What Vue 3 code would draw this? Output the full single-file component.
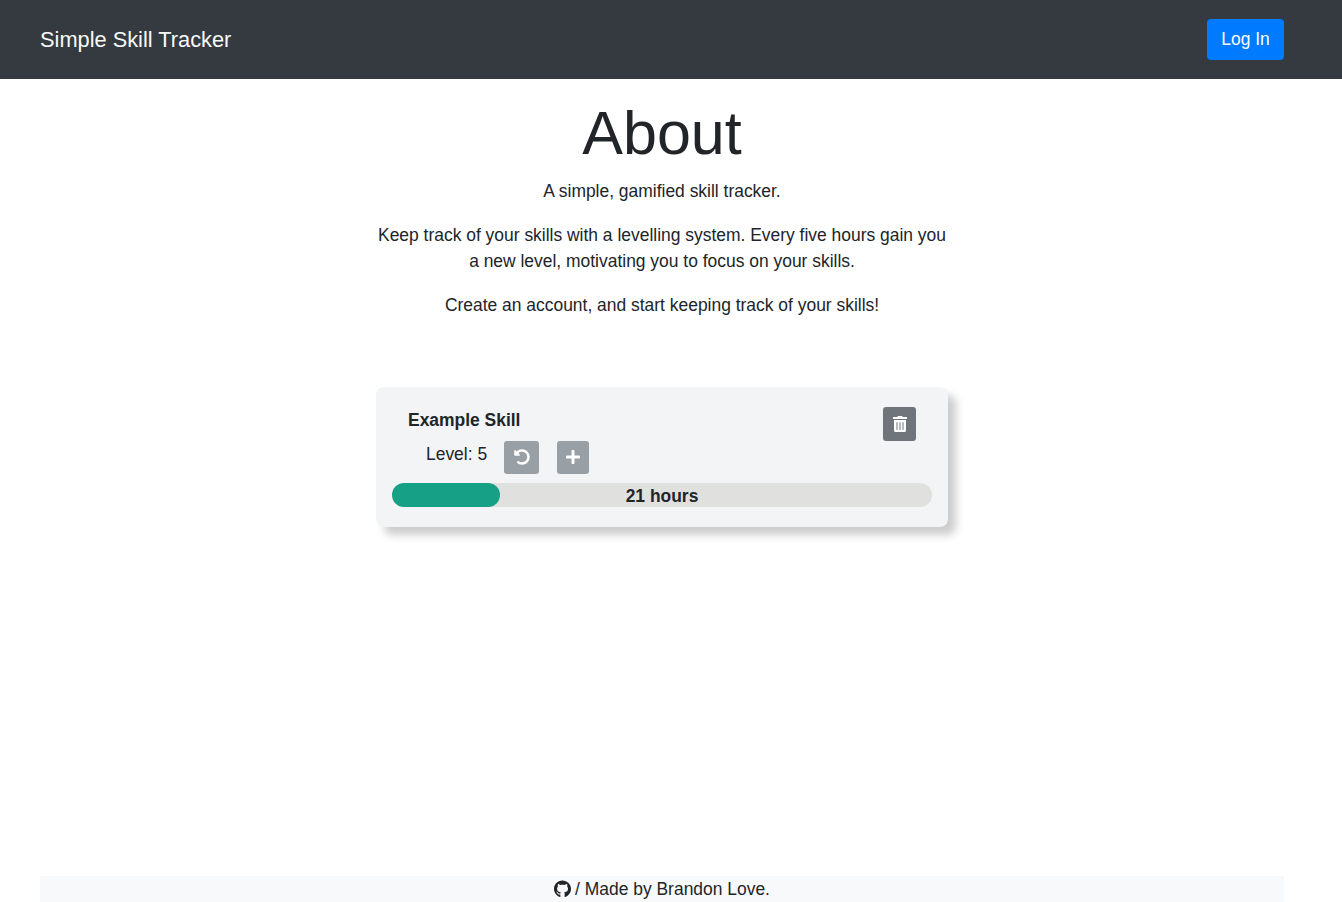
<script setup>
const paragraphs = [
  'A simple, gamified skill tracker.',
  'Keep track of your skills with a levelling system. Every five hours gain you a new level, motivating you to focus on your skills.',
  'Create an account, and start keeping track of your skills!'
]
const progress = 20
</script>

<template>
  <div class="page">
    <nav class="navbar">
      <span class="brand">Simple Skill Tracker</span>
      <button class="login">Log In</button>
    </nav>
    <main class="main">
      <h1 class="title">About</h1>
      <div class="intro">
        <p v-for="p in paragraphs" :key="p">{{ p }}</p>
      </div>
      <section class="card">
        <div class="head">
          <span class="name">Example Skill</span>
          <button class="btn trash" aria-label="Delete">
            <svg viewBox="0 0 448 512" width="14" height="16"><path fill="currentColor" d="M32 464a48 48 0 0 0 48 48h288a48 48 0 0 0 48-48V128H32zm272-256a16 16 0 0 1 32 0v224a16 16 0 0 1-32 0zm-96 0a16 16 0 0 1 32 0v224a16 16 0 0 1-32 0zm-96 0a16 16 0 0 1 32 0v224a16 16 0 0 1-32 0zM432 32H312l-9.4-18.7A24 24 0 0 0 281.1 0H166.8a23.72 23.72 0 0 0-21.4 13.3L136 32H16A16 16 0 0 0 0 48v32a16 16 0 0 0 16 16h416a16 16 0 0 0 16-16V48a16 16 0 0 0-16-16z"/></svg>
          </button>
        </div>
        <div class="level-row">
          <span class="level">Level: 5</span>
          <button class="btn light undo" aria-label="Undo">
            <svg viewBox="0 0 512 512" width="16" height="16"><path fill="currentColor" d="M255.545 8c-66.269.119-126.438 26.233-170.86 68.685L48.971 40.971C33.851 25.851 8 36.559 8 57.941V192c0 13.255 10.745 24 24 24h134.059c21.382 0 32.09-25.851 16.971-40.971l-41.75-41.75c30.864-28.899 70.801-44.907 113.23-45.273 92.398-.798 170.283 73.977 169.484 169.442C423.236 348.009 349.816 424 256 424c-41.127 0-79.997-14.678-110.63-41.556-4.743-4.161-11.906-3.908-16.368.553L89.34 422.659c-4.872 4.872-4.631 12.815.482 17.433C133.798 479.813 192.074 504 256 504c136.966 0 247.999-111.033 248-247.998C504.001 119.193 392.354 7.755 255.545 8z"/></svg>
          </button>
          <button class="btn light plus" aria-label="Add">
            <svg viewBox="0 0 448 512" width="14" height="16"><path fill="currentColor" d="M416 208H272V64c0-17.67-14.33-32-32-32h-32c-17.67 0-32 14.33-32 32v144H32c-17.67 0-32 14.33-32 32v32c0 17.67 14.33 32 32 32h144v144c0 17.67 14.33 32 32 32h32c17.67 0 32-14.33 32-32V304h144c17.67 0 32-14.33 32-32v-32c0-17.67-14.33-32-32-32z"/></svg>
          </button>
        </div>
        <div class="track">
          <div class="fill" :style="{ width: progress + '%' }"></div>
          <span class="hours">21 hours</span>
        </div>
      </section>
    </main>
    <footer class="footer">
      <svg class="gh" viewBox="0 0 496 512" width="17" height="18"><path fill="currentColor" d="M165.9 397.4c0 2-2.3 3.6-5.2 3.6-3.3 0-5.6-1.6-5.6-3.6 0-2 2.3-3.6 5.2-3.6 3-.3 5.6 1.3 5.6 3.6zm-31.1-4.5c-.7 2 1.3 4.3 4.3 4.9 2.6 1 5.6 0 6.2-2s-1.3-4.3-4.3-5.2c-2.6-.7-5.5.3-6.2 2.3zm44.2-1.7c-2.9.7-4.9 2.6-4.6 4.9.3 2 2.9 3.3 5.9 2.6 2.9-.7 4.9-2.6 4.6-4.6-.3-1.9-3-3.2-5.9-2.9zM244.8 8C106.1 8 0 113.3 0 252c0 110.9 69.8 205.8 169.5 239.2 12.8 2.3 17.3-5.6 17.3-12.1 0-6.2-.3-40.4-.3-61.4 0 0-70 15-84.7-29.8 0 0-11.4-29.1-27.8-36.6 0 0-22.9-15.7 1.6-15.4 0 0 24.9 2 38.6 25.8 21.9 38.6 58.6 27.5 72.9 20.9 2.3-16 8.8-27.1 16-33.7-55.9-6.2-112.3-14.3-112.3-110.5 0-27.5 7.6-41.3 23.6-58.9-2.6-6.5-11.1-33.3 2.6-67.9 20.9-6.5 69 27 69 27 20-5.6 41.5-8.5 62.8-8.5s42.8 2.9 62.8 8.5c0 0 48.1-33.6 69-27 13.7 34.7 5.2 61.4 2.6 67.9 16 17.7 25.8 31.5 25.8 58.9 0 96.5-58.9 104.2-114.8 110.5 9.2 7.9 17 22.9 17 46.4 0 33.7-.3 75.4-.3 83.6 0 6.5 4.6 14.4 17.3 12.1C428.2 457.8 496 362.9 496 252 496 113.3 383.5 8 244.8 8z"/></svg>
      <span>/ Made by Brandon Love.</span>
    </footer>
  </div>
</template>

<style scoped>
.page {
  height: 100vh;
  display: flex;
  flex-direction: column;
  font-family: "Liberation Sans", Arial, sans-serif;
  font-size: 17.446px;
  line-height: 26.17px;
  color: #212529;
  background: #fff;
}
.navbar {
  height: 79px;
  flex: none;
  background: #343a40;
  display: flex;
  align-items: center;
  justify-content: space-between;
  padding: 0 58px 0 40px;
  box-sizing: border-box;
}
.brand {
  color: #f8f9fa;
  font-size: 21.8px;
  padding-top: 2px;
}
.login {
  width: 77px;
  height: 41px;
  padding: 0;
  border: 0;
  border-radius: 4px;
  background: #007bff;
  color: #fff;
  font-family: "Liberation Sans", Arial, sans-serif;
  font-size: 17.446px;
}
.main {
  flex: 1;
  display: flex;
  flex-direction: column;
  align-items: center;
  padding-right: 18px;
}
.title {
  margin: 16px 0 6px;
  font-size: 61.06px;
  line-height: 77px;
  font-weight: 400;
}
.intro {
  width: 572px;
  text-align: center;
}
.intro p {
  margin: 0 0 17.6px;
}
.card {
  width: 572px;
  height: 140px;
  margin-top: 52px;
  padding: 20px 16px;
  box-sizing: border-box;
  background: #f3f4f6;
  border-radius: 8px;
  box-shadow: 8px 8px 8px rgba(0, 0, 0, 0.2);
}
.head {
  display: flex;
  justify-content: space-between;
  padding: 0 16px;
  height: 34px;
}
.name {
  font-weight: 700;
}
.btn {
  display: flex;
  align-items: center;
  justify-content: center;
  padding: 0;
  border: 0;
  border-radius: 3px;
  color: #fff;
}
.trash {
  width: 33px;
  height: 34px;
  background: #6f757a;
}
.level-row {
  display: flex;
  height: 33px;
  padding-left: 34px;
}
.level {
  width: 78px;
}
.light {
  height: 33px;
  padding-bottom: 2px;
  background: #989fa5;
}
.undo {
  width: 35px;
  margin-right: 18px;
}
.plus {
  width: 32px;
}
.track {
  position: relative;
  height: 24px;
  margin-top: 9px;
  border-radius: 12px;
  background: #e0e0de;
  text-align: center;
  font-weight: 700;
}
.fill {
  position: absolute;
  inset: 0 auto 0 0;
  border-radius: 12px;
  background: #16a085;
}
.hours {
  position: relative;
}
.footer {
  flex: none;
  height: 26px;
  margin: 0 58px 0 40px;
  background: #f8f9fa;
  display: flex;
  justify-content: center;
  align-items: center;
  gap: 4px;
}
</style>

<style>
body { margin: 0; }
</style>
